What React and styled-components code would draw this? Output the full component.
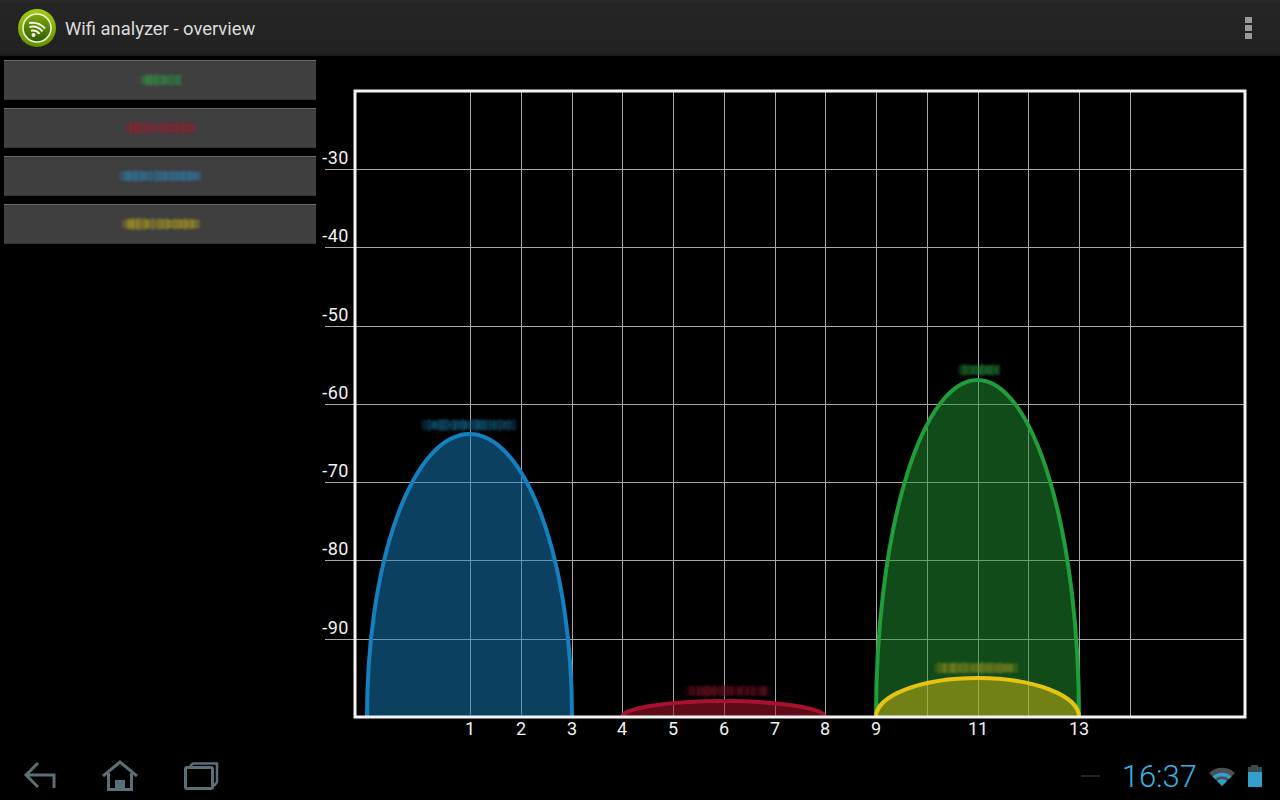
import React from 'react';
import styled, { createGlobalStyle } from 'styled-components';

const GlobalStyle = createGlobalStyle`
  html, body {
    margin: 0;
    padding: 0;
    background: #000;
  }
`;

const Screen = styled.div`
  width: 1280px;
  height: 800px;
  display: flex;
  flex-direction: column;
  overflow: hidden;
  background: #000;
  font-family: Roboto, "Liberation Sans", sans-serif;
`;

const ActionBar = styled.header`
  height: 56px;
  box-sizing: border-box;
  display: flex;
  align-items: center;
  padding: 2px 28px 0 18px;
  background: linear-gradient(#2b2b2b 0, #252525 3px, #222 100%);
  border-bottom: 2px solid #1b1b1b;
`;

const Title = styled.h1`
  margin: 0 0 0 9px;
  flex: 1;
  font-size: 18.4px;
  font-weight: 400;
  color: #dcdcdc;
`;

const Overflow = styled.div`
  display: flex;
  flex-direction: column;
  gap: 2px;
  margin-top: -1px;
`;

const Dot = styled.span`
  width: 7px;
  height: 6px;
  background: #9a9a9a;
`;

const Main = styled.main`
  height: 696px;
  display: flex;
`;

const Sidebar = styled.aside`
  width: 316px;
  box-sizing: border-box;
  padding: 4px 0 0 4px;
  display: flex;
  flex-direction: column;
  gap: 8px;
`;

const NetworkButton = styled.button`
  width: 312px;
  height: 40px;
  padding: 0;
  display: flex;
  align-items: center;
  justify-content: center;
  background: #3f3f3f;
  border: 0;
  border-top: 1px solid #6a6a6a;
  border-bottom: 1px solid #333;
`;

const Chart = styled.svg`
  display: block;
  width: 964px;
  height: 696px;
`;

const AxisLabel = styled.text`
  font-family: Roboto, "Liberation Sans", sans-serif;
  font-size: 18px;
  fill: #f2f2f2;
`;

const NavBar = styled.footer`
  height: 48px;
  display: flex;
  align-items: center;
  justify-content: space-between;
  padding: 0 17px 0 20px;
`;

const NavIcons = styled.div`
  display: flex;
  align-items: center;
  gap: 44px;
`;

const NavIcon = styled.svg`
  display: block;
  height: 48px;
  width: ${(props) => props.$w}px;
  fill: none;
  stroke: #5b6f77;
  stroke-width: 3;
`;

const StatusArea = styled.div`
  display: flex;
  align-items: center;
`;

const Notification = styled.span`
  width: 19px;
  height: 2px;
  background: #1c2624;
  margin-right: 22px;
`;

const Clock = styled.span`
  font-size: 31px;
  font-weight: 300;
  color: #33b5e5;
  margin-right: 11px;
`;

const StatusIcon = styled.svg`
  display: block;
  margin-left: ${(props) => props.$gap || 0}px;
`;

const networks = [
  { name: 'green', color: '#2f8f3f', bar: [141, 182], dim: '#1f8a38', at: [958, 1000, 370], peak: 380, x: [876, 1079], stroke: '#1f9e3a', fill: 'rgba(31, 150, 50, 0.5)' },
  { name: 'red', color: '#8c1f30', bar: [125, 197], dim: '#6a0d1e', at: [685, 770, 691], peak: 701, x: [622, 825], stroke: '#a8122f', fill: 'rgba(170, 20, 45, 0.55)' },
  { name: 'blue', color: '#2a7aa8', bar: [120, 202], dim: '#14597c', at: [421, 516, 425], peak: 434, x: [367, 572], stroke: '#1580c0', fill: 'rgba(21, 128, 192, 0.5)' },
  { name: 'yellow', color: '#a89a20', bar: [124, 201], dim: '#8a8a1c', at: [934, 1018, 668], peak: 678, x: [876, 1079], stroke: '#e8c412', fill: 'rgba(232, 196, 18, 0.45)' },
];

const gridY = [169, 247, 326, 404, 482, 560, 639];
const dbLabels = [-30, -40, -50, -60, -70, -80, -90];
const gridX = [470, 521, 572, 622, 673, 724, 775, 825, 876, 927, 978, 1028, 1079, 1130];
const channels = [
  [1, 470], [2, 521], [3, 572], [4, 622], [5, 673], [6, 724],
  [7, 775], [8, 825], [9, 876], [11, 978], [13, 1079],
];

// fixed noise so the smear does not repeat in beads
const noise = (n) => {
  const v = Math.sin(n * 12.9898) * 43758.5453;
  return v - Math.floor(v);
};

// the names are smeared in the picture, so just stripes and a blur
const smearStripes = (x0, x1, cy, color) => {
  const items = [];
  for (let x = x0; x < x1; x += 2) {
    const t = (x - x0) / (x1 - x0);
    const edge = Math.min(1, Math.min(t, 1 - t) * 8 + 0.35);
    const h = 8 + noise(x) * 4;
    items.push(
      <rect
        key={x}
        x={x}
        y={cy - h / 2}
        width="2"
        height={h}
        fill={color}
        opacity={edge * (0.45 + noise(x + 31) * 0.35)}
      />
    );
  }
  return items;
};

const Stripes = ({ x0, x1, cy, color }) => (
  <g filter="url(#smear)">{smearStripes(x0, x1, cy, color)}</g>
);

const BarSmudge = ({ net }) => {
  const w = net.bar[1] - net.bar[0];
  return (
    <svg width={w + 8} height="24" viewBox={`-4 -12 ${w + 8} 24`}>
      <filter id={`bar-${net.name}`} x="-10%" y="-50%" width="120%" height="200%">
        <feGaussianBlur stdDeviation="1 1" />
      </filter>
      <g filter={`url(#bar-${net.name})`}>{smearStripes(0, w, 0, net.color)}</g>
    </svg>
  );
};

const Logo = () => (
  <svg width="38" height="38" viewBox="0 0 38 38">
    <defs>
      <linearGradient id="ring" x1="0" y1="0" x2="0" y2="1">
        <stop offset="0" stopColor="#a4cc10" />
        <stop offset="1" stopColor="#628f00" />
      </linearGradient>
      <linearGradient id="core" x1="0" y1="0" x2="0" y2="1">
        <stop offset="0" stopColor="#7fa80a" />
        <stop offset="1" stopColor="#2f5c02" />
      </linearGradient>
    </defs>
    <circle cx="19" cy="19" r="19" fill="url(#ring)" />
    <circle cx="19" cy="19" r="14" fill="url(#core)" stroke="#eef3dc" strokeWidth="1.6" />
    <g fill="none" stroke="#f2f5e4" strokeWidth="2">
      <path d="M11 14 A 17 17 0 0 1 27 19.500" />
      <path d="M11.500 18 A 13 13 0 0 1 24.500 22.500" />
      <path d="M13 21.800 A 8.500 8.500 0 0 1 21.500 24.800" />
    </g>
    <circle cx="15.500" cy="26" r="2" fill="#f2f5e4" />
  </svg>
);

const App = () => {
  return (
    <Screen>
      <GlobalStyle />
      <ActionBar>
        <Logo />
        <Title>Wifi analyzer - overview</Title>
        <Overflow>
          <Dot />
          <Dot />
          <Dot />
        </Overflow>
      </ActionBar>

      <Main>
        <Sidebar>
          {networks.map((net) => (
            <NetworkButton key={net.name}>
              <BarSmudge net={net} />
            </NetworkButton>
          ))}
        </Sidebar>

        <Chart viewBox="316 56 964 696">
          <defs>
            <filter id="smear" x="-10%" y="-50%" width="120%" height="200%">
              <feGaussianBlur stdDeviation="0.8 1" />
            </filter>
          </defs>

          {gridY.map((y) => (
            <line key={y} x1="325" x2="1245" y1={y + 0.5} y2={y + 0.5} stroke="#a8a8a8" />
          ))}
          {gridX.map((x) => (
            <line key={x} x1={x + 0.5} x2={x + 0.5} y1="91" y2="717" stroke="#a8a8a8" />
          ))}

          {networks.map((net) => (
            <g key={net.name}>
              <path
                d={`M${net.x[0]} 717 A${(net.x[1] - net.x[0]) / 2} ${717 - net.peak} 0 0 1 ${net.x[1]} 717`}
                fill={net.fill}
                stroke={net.stroke}
                strokeWidth="4"
              />
              <Stripes x0={net.at[0]} x1={net.at[1]} cy={net.at[2]} color={net.dim} />
            </g>
          ))}

          <rect x="355" y="91" width="890" height="626" fill="none" stroke="#f4f4f4" strokeWidth="3" />

          {dbLabels.map((db, i) => (
            <AxisLabel key={db} x="349" y={gridY[i] - 5} textAnchor="end" letterSpacing="0.5">{db}</AxisLabel>
          ))}
          {channels.map(([ch, x]) => (
            <AxisLabel key={ch} x={x} y="735" textAnchor="middle">{ch}</AxisLabel>
          ))}
        </Chart>
      </Main>

      <NavBar>
        <NavIcons>
          <NavIcon $w={36} viewBox="20 752 36 48">
            <path d="M38 763 L26 775 L38 787 M26 775 H54 V788" />
          </NavIcon>
          <NavIcon $w={40} viewBox="100 752 40 48">
            <path d="M103 776 L120 762 L137 776 M108.500 773 V789.500 H131.500 V773" />
            <rect x="115" y="780" width="10" height="9" fill="#5b6f77" stroke="none" />
          </NavIcon>
          <NavIcon $w={36} viewBox="183 752 36 48">
            <rect x="184.500" y="767.500" width="27" height="21" rx="1.500" />
            <path d="M189 766 L192 763.500 H216 V782 L213 786" strokeWidth="2.500" />
          </NavIcon>
        </NavIcons>

        <StatusArea>
          <Notification />
          <Clock>16:37</Clock>
          <StatusIcon width="28" height="22" viewBox="0 0 28 22">
            <path d="M1 8 A 19 19 0 0 1 27 8 L14 21 Z" fill="#4a4f50" />
            <path d="M4.500 11.500 A 14 14 0 0 1 23.500 11.500 L21 14 A 10.500 10.500 0 0 0 7 14 Z" fill="#33a0cc" />
            <path d="M9 16 A 8 8 0 0 1 19 16 L14 21 Z" fill="#33a0cc" />
          </StatusIcon>
          <StatusIcon $gap={11} width="16" height="22" viewBox="0 0 16 22">
            <rect x="4" y="0" width="7" height="3" fill="#3b4a50" />
            <rect x="1" y="2" width="14" height="5" fill="#3b4a50" />
            <rect x="1" y="7" width="14" height="15" fill="#33a0cc" />
          </StatusIcon>
        </StatusArea>
      </NavBar>
    </Screen>
  );
};

export default App;
